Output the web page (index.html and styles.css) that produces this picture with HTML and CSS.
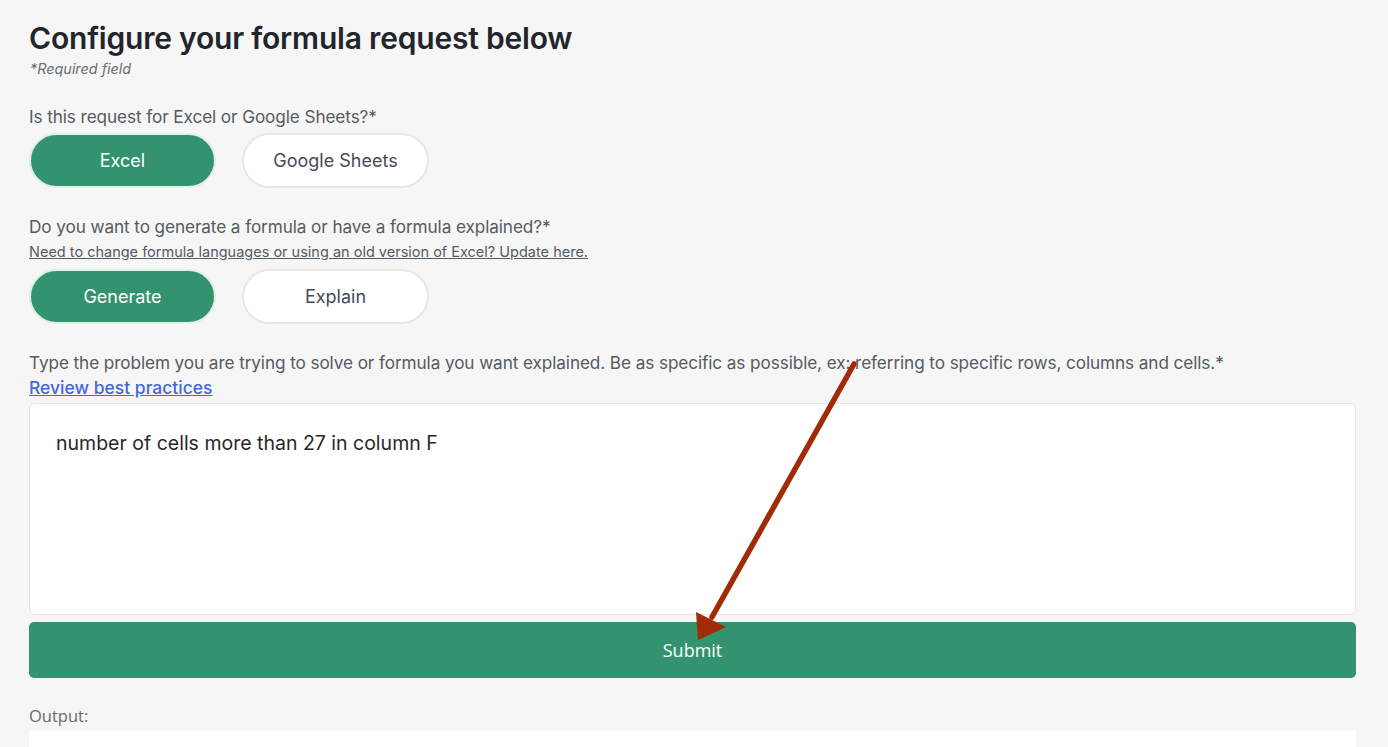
FILE: index.html
```html
<!DOCTYPE html>
<html lang="en">
<head>
  <meta charset="UTF-8" />
  <meta name="viewport" content="width=device-width, initial-scale=1" />
  <title>Formula request</title>
  <link rel="stylesheet" href="styles.css">
</head>
<body>

<main class="page">
  <h1 class="title">Configure your formula request below</h1>
  <p class="required">*Required field</p>

  <section class="field first">
    <p class="label">Is this request for Excel or Google Sheets?*</p>
    <div class="choices">
      <button type="button" class="choice active">Excel</button>
      <button type="button" class="choice">Google Sheets</button>
    </div>
  </section>

  <section class="field">
    <p class="label">Do you want to generate a formula or have a formula explained?*</p>
    <a href="#" class="small-link">Need to change formula languages or using an old version of Excel? Update here.</a>
    <div class="choices">
      <button type="button" class="choice active">Generate</button>
      <button type="button" class="choice">Explain</button>
    </div>
  </section>

  <section class="field">
    <p class="label">Type the problem you are trying to solve or formula you want explained. Be as specific as possible, ex: referring to specific rows, columns and cells.*</p>
    <a href="#" class="best-link">Review best practices</a>
    <textarea class="prompt">number of cells more than 27 in column F</textarea>
    <button type="submit" class="submit">Submit</button>
  </section>

  <p class="output-label">Output:</p>
  <div class="output"></div>
</main>

<!-- annotation arrow drawn over the page -->
<svg class="arrow" width="1388" height="747" viewBox="0 0 1388 747">
  <line x1="854" y1="364" x2="712" y2="617" stroke="#a02b06" stroke-width="5.5" stroke-linecap="round" />
  <polygon points="696,612 726,627 698,640" fill="#a02b06" />
</svg>

</body>
</html>
```

FILE: styles.css
```css
body {
  margin: 0;
  background: #f6f6f6;
  font-family: Inter, 'Noto Sans', sans-serif;
  color: #555b62;
}
.page {
  position: relative;
  padding: 19px 32px 0 29px;
}
.title {
  margin: 0;
  font-size: 30px;
  font-weight: 600;
  color: #22252b;
  letter-spacing: -0.2px;
  line-height: 38px;
}
.required {
  margin: 3px 0 0 1px;
  font-size: 14.4px;
  font-style: italic;
  color: #6a6f75;
}
.field.first {
  margin-top: 29px;
}
.field + .field {
  margin-top: 28px;
}
.label {
  margin: 0;
  font-size: 17.2px;
  line-height: 22px;
  letter-spacing: -0.1px;
}
.small-link {
  display: block;
  margin-top: 5px;
  font-size: 14.5px;
  line-height: 18px;
  color: #555b62;
}
.choices {
  display: flex;
  gap: 26px;
  margin-top: 5px;
}
.small-link + .choices {
  margin-top: 8px;
}
.choice {
  width: 187px;
  height: 55px;
  border-radius: 28px;
  border: 2px solid #e6e8ec;
  background: #fff;
  font-family: inherit;
  font-size: 18px;
  color: #454b55;
  cursor: pointer;
}
.choice.active {
  background: #33936e;
  border-color: #e3efe9;
  color: #fff;
}
.best-link {
  display: block;
  margin-top: 3px;
  font-size: 17.5px;
  line-height: 22px;
  font-weight: 500;
  color: #4466e0;
}
.prompt {
  display: block;
  width: 100%;
  height: 212px;
  margin-top: 4px;
  padding: 27px 26px;
  box-sizing: border-box;
  border: 1px solid #e3e5ea;
  border-radius: 6px;
  background: #fff;
  font-family: inherit;
  font-size: 19.5px;
  color: #26282c;
  resize: none;
}
.submit {
  display: block;
  width: 100%;
  height: 56px;
  margin-top: 7px;
  border: none;
  border-radius: 5px;
  background: #33936e;
  color: #fff;
  font-family: 'Open Sans', sans-serif;
  font-size: 18px;
  font-weight: 500;
  cursor: pointer;
}
.output-label {
  margin: 27px 0 0;
  font-family: 'Open Sans', sans-serif;
  font-size: 16.5px;
  line-height: 22px;
  color: #666b71;
}
.output {
  height: 40px;
  margin-top: 4px;
  background: #fff;
}
.arrow {
  position: absolute;
  top: 0;
  left: 0;
  pointer-events: none;
}
```
